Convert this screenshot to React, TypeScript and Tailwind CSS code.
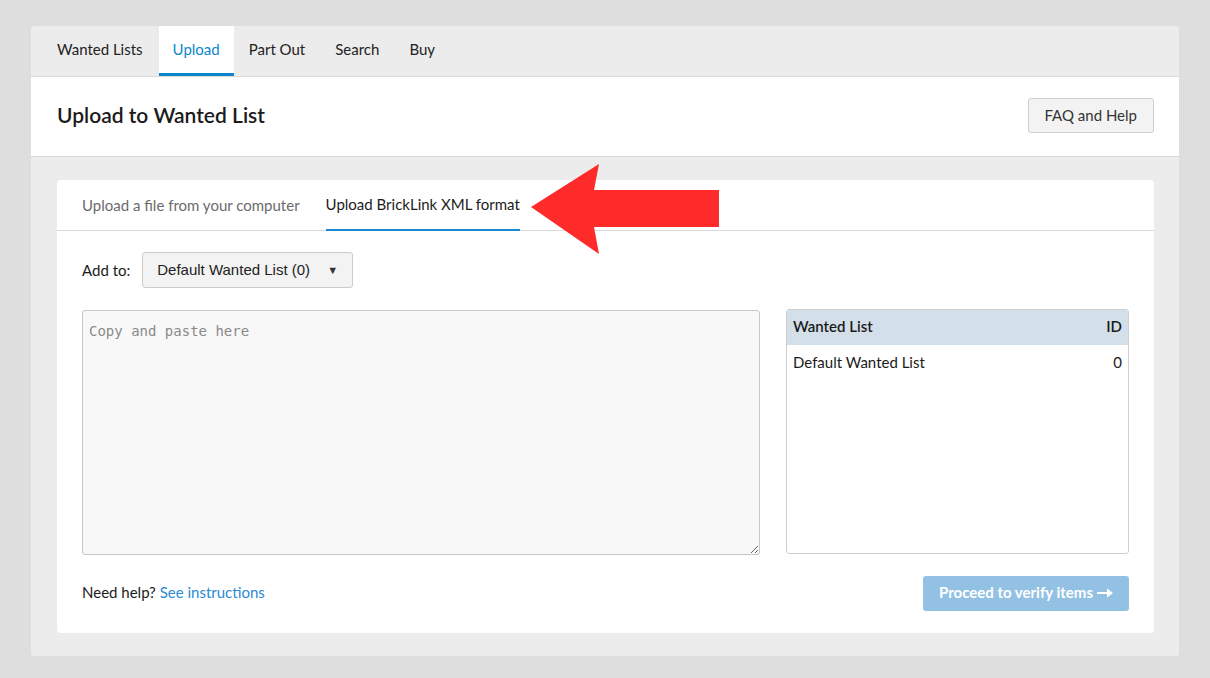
import React from 'react';

const navTabs = ['Wanted Lists', 'Upload', 'Part Out', 'Search', 'Buy'];

const PointerArrow: React.FC = () => (
  <svg
    className="absolute left-[474px] top-[-16px] pointer-events-none"
    width="190"
    height="92"
    viewBox="0 0 190 92"
  >
    <polygon points="0,43 68,0 63,26 188,26 188,63 63,63 68,90" fill="#ff2a2a" />
  </svg>
);

const App: React.FC = () => {
  return (
    <div
      className="min-h-screen w-full bg-[#dedede] pt-[26px] px-[31px]"
      style={{ fontFamily: 'Lato, "Open Sans", sans-serif' }}
    >
      <div className="w-[1148px] h-[630px] bg-[#ececec] rounded-[3px] overflow-hidden flex flex-col">
        {/* Top navigation */}
        <nav className="h-[51px] flex items-stretch pl-[11px] border-b border-[#dcdcdc]">
          {navTabs.map((tab) => {
            const active = tab === 'Upload';
            return (
              <div
                key={tab}
                className={
                  active
                    ? 'px-[14px] ml-px flex items-center bg-white text-[15px] text-[#0b86cc] border-b-[3px] border-[#0b86cc]'
                    : 'px-[15px] pb-[3px] flex items-center text-[15px] text-[#222]'
                }
              >
                {tab}
              </div>
            );
          })}
        </nav>

        {/* Page header */}
        <header className="h-[80px] bg-white flex items-center justify-between pl-[26px] pr-[25px] pb-[3px] border-b border-[#d8d8d8]">
          <h1 className="text-[21px] font-semibold text-[#1b1b1b]">Upload to Wanted List</h1>
          <button className="h-[35px] px-[16px] bg-[#f3f3f3] border border-[#cfcfcf] rounded-[3px] text-[15px] text-[#333]">
            FAQ and Help
          </button>
        </header>

        <div className="flex-1 px-[26px] pt-[23px]">
          <div className="relative bg-white rounded-[4px] h-[453px] w-[1097px]">
            {/* Upload mode tabs */}
            <div className="h-[51px] flex items-stretch pl-[25px] gap-[26px] border-b border-[#d9d9d9]">
              <div className="flex items-center text-[15px] text-[#6b6b6b]">
                Upload a file from your computer
              </div>
              <div className="flex items-center text-[15px] text-[#1c1c1c] border-b-2 border-[#1a8ad0] mb-[-1px]">
                Upload BrickLink XML format
              </div>
            </div>
            <PointerArrow />

            <div className="px-[25px] pt-[21px]">
              <div className="flex items-center gap-[12px]">
                <span className="text-[15px] text-[#1b1b1b]">Add to:</span>
                <div
                  className="h-[36px] w-[211px] flex items-center justify-between pl-[14px] pr-[14px] bg-[#f3f3f3] border border-[#cccccc] rounded-[3px] text-[15px] text-[#222]"
                  style={{ fontFamily: '"Liberation Sans", Arial, sans-serif' }}
                >
                  <span>Default Wanted List (0)</span>
                  <span className="text-[11px] text-[#333]">▼</span>
                </div>
              </div>

              <div className="flex gap-[26px] mt-[22px]">
                <textarea
                  className="w-[678px] h-[245px] bg-[#f8f8f8] border border-[#c8c8c8] rounded-[3px] px-[6px] py-[10px] text-[14px] text-[#333] placeholder:text-[#8a8a8a] outline-none"
                  style={{ fontFamily: '"DejaVu Sans Mono", "Liberation Mono", monospace' }}
                  placeholder="Copy and paste here"
                />
                <div className="w-[343px] h-[245px] -mt-px border border-[#cfcfcf] rounded-[3px] overflow-hidden">
                  <div className="h-[35px] bg-[#d3e0ea] flex items-center justify-between px-[6px] pb-[2px] text-[15px] font-semibold text-[#1b1b1b]">
                    <span>Wanted List</span>
                    <span>ID</span>
                  </div>
                  <div className="h-[34px] flex items-center justify-between px-[6px] text-[15px] text-[#1b1b1b]">
                    <span>Default Wanted List</span>
                    <span>0</span>
                  </div>
                </div>
              </div>

              <div className="flex items-center justify-between mt-[21px]">
                <p className="text-[15px] text-[#1b1b1b] pb-[2px]">
                  Need help? <a className="text-[#2a8ad2]">See instructions</a>
                </p>
                <button className="h-[35px] w-[206px] bg-[#93c1e4] rounded-[3px] text-white text-[15px] font-bold flex items-center justify-center gap-[4px] pb-[2px]">
                  Proceed to verify items
                  <svg width="16" height="10" viewBox="0 0 16 10">
                    <rect x="0" y="4" width="11" height="2" fill="white" />
                    <polygon points="10,0.5 16,5 10,9.5" fill="white" />
                  </svg>
                </button>
              </div>
            </div>
          </div>
        </div>
      </div>
    </div>
  );
};

export default App;
